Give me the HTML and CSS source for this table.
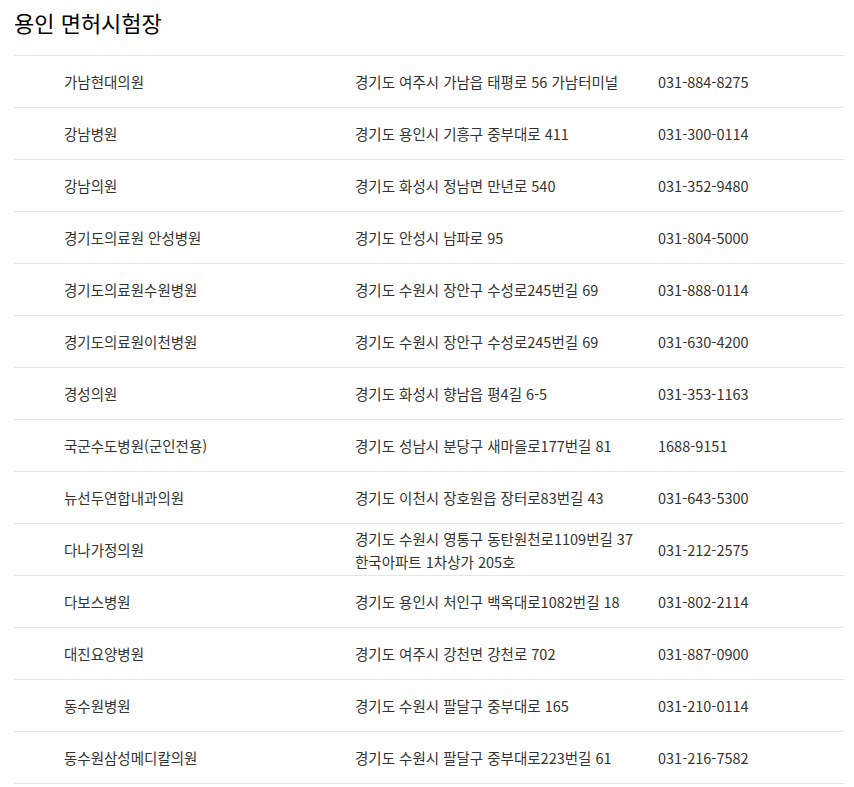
FILE: index.html
```html
<!DOCTYPE html>
<html lang="ko">
<head>
<meta charset="utf-8">
<link rel="stylesheet" href="styles.css">
</head>
<body>
<div class="page">
  <h2 class="title">용인 면허시험장</h2>
  <div class="list">
    <div class="row"><div class="name">가남현대의원</div><div class="addr">경기도 여주시 가남읍 태평로 56 가남터미널</div><div class="tel">031-884-8275</div></div>
    <div class="row"><div class="name">강남병원</div><div class="addr">경기도 용인시 기흥구 중부대로 411</div><div class="tel">031-300-0114</div></div>
    <div class="row"><div class="name">강남의원</div><div class="addr">경기도 화성시 정남면 만년로 540</div><div class="tel">031-352-9480</div></div>
    <div class="row"><div class="name">경기도의료원 안성병원</div><div class="addr">경기도 안성시 남파로 95</div><div class="tel">031-804-5000</div></div>
    <div class="row"><div class="name">경기도의료원수원병원</div><div class="addr">경기도 수원시 장안구 수성로245번길 69</div><div class="tel">031-888-0114</div></div>
    <div class="row"><div class="name">경기도의료원이천병원</div><div class="addr">경기도 수원시 장안구 수성로245번길 69</div><div class="tel">031-630-4200</div></div>
    <div class="row"><div class="name">경성의원</div><div class="addr">경기도 화성시 향남읍 평4길 6-5</div><div class="tel">031-353-1163</div></div>
    <div class="row"><div class="name">국군수도병원(군인전용)</div><div class="addr">경기도 성남시 분당구 새마을로177번길 81</div><div class="tel">1688-9151</div></div>
    <div class="row"><div class="name">뉴선두연합내과의원</div><div class="addr">경기도 이천시 장호원읍 장터로83번길 43</div><div class="tel">031-643-5300</div></div>
    <div class="row"><div class="name">다나가정의원</div><div class="addr">경기도 수원시 영통구 동탄원천로1109번길 37<br>한국아파트 1차상가 205호</div><div class="tel">031-212-2575</div></div>
    <div class="row"><div class="name">다보스병원</div><div class="addr">경기도 용인시 처인구 백옥대로1082번길 18</div><div class="tel">031-802-2114</div></div>
    <div class="row"><div class="name">대진요양병원</div><div class="addr">경기도 여주시 강천면 강천로 702</div><div class="tel">031-887-0900</div></div>
    <div class="row"><div class="name">동수원병원</div><div class="addr">경기도 수원시 팔달구 중부대로 165</div><div class="tel">031-210-0114</div></div>
    <div class="row"><div class="name">동수원삼성메디칼의원</div><div class="addr">경기도 수원시 팔달구 중부대로223번길 61</div><div class="tel">031-216-7582</div></div>
  </div>
</div>
</body>
</html>
```
FILE: styles.css
```css
html, body {
  margin: 0;
  padding: 0;
  background: #fff;
}
body {
  font-family: "Noto Sans CJK KR", "Noto Sans", sans-serif;
  color: #333;
}
.page {
  padding: 0 9px 0 14px;
}
.title {
  margin: 0;
  height: 55px;
  display: flex;
  align-items: center;
  font-size: 22px;
  font-weight: 400;
  color: #000;
  padding-bottom: 12px;
  box-sizing: border-box;
  line-height: 1;
}
.list {
  border-top: 1px solid #e6e6e6;
}
.row {
  display: grid;
  grid-template-columns: 341px 303px 1fr;
  align-items: center;
  height: 51px;
  border-bottom: 1px solid #e6e6e6;
  font-size: 14.5px;
  line-height: 23px;
}
.name {
  padding-left: 50px;
}
```
